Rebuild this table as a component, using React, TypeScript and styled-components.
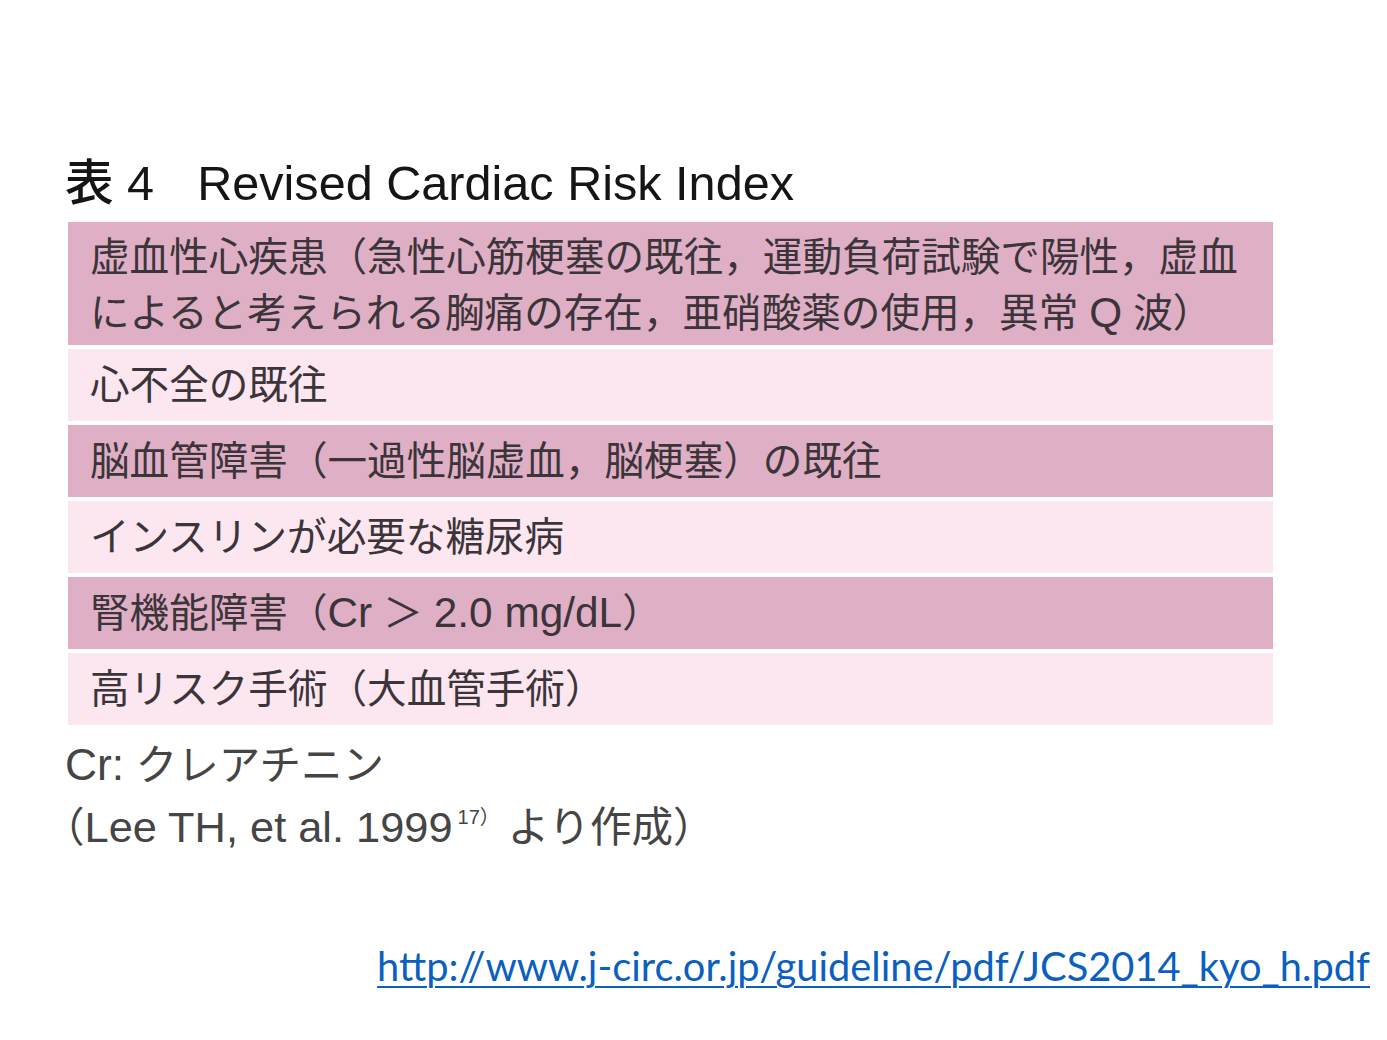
import React from "react";
import styled, { createGlobalStyle } from "styled-components";

const GlobalStyle = createGlobalStyle`
  html, body {
    margin: 0;
    padding: 0;
    background: #ffffff;
  }
  body {
    font-family: "Liberation Sans", "Noto Sans CJK JP", sans-serif;
  }
`;

const Page = styled.div`
  width: 1387px;
  height: 1040px;
  box-sizing: border-box;
  padding: 152px 0 0 0;
  display: flex;
  flex-direction: column;
  background: #ffffff;
`;

const Figure = styled.section`
  display: flex;
  flex-direction: column;
  padding-left: 65px;
`;

const Title = styled.h1`
  margin: 0;
  font-family: "Liberation Sans", "Noto Sans CJK JP", sans-serif;
  font-weight: 400;
  font-size: 48.6px;
  line-height: 62px;
  color: #151515;
  display: flex;
  align-items: baseline;
`;

const TitleLabel = styled.span`
  font-weight: 500;
  margin-right: 43px;
`;

const Table = styled.div`
  margin-top: 8px;
  margin-left: 3px;
  width: 1205px;
  display: flex;
  flex-direction: column;
  gap: 4px;
`;

const Row = styled.div<{ $dark?: boolean; $tall?: boolean }>`
  background: ${(p) => (p.$dark ? "#dfafc6" : "#fce6f0")};
  padding: ${(p) => (p.$tall ? "7px 20px 4px 22px" : "8px 20px 8px 22px")};
  font-family: "Liberation Sans", "Noto Sans CJK JP", sans-serif;
  font-size: 39.6px;
  line-height: 56px;
  color: #3b3539;
  white-space: nowrap;
`;

const Lat = styled.span<{ $scale?: number }>`
  font-size: ${(p) => p.$scale ?? 1.07}em;
  line-height: 0;
`;

const Notes = styled.div`
  margin-top: 10px;
  display: flex;
  flex-direction: column;
  font-family: "Liberation Sans", "Noto Sans CJK JP", sans-serif;
  font-size: 41.5px;
  line-height: 62px;
  color: #454545;
`;

const NoteLine = styled.span`
  white-space: nowrap;
`;

const OpenParen = styled.span`
  display: inline-block;
  margin-left: -22px;
`;

const Sup = styled.sup`
  font-size: 20px;
  line-height: 0;
  vertical-align: baseline;
  position: relative;
  top: -18px;
  margin: 0 8px 0 5px;
`;

const LinkRow = styled.div`
  margin-top: 84px;
  display: flex;
  justify-content: flex-end;
  padding-right: 17px;
`;

const Link = styled.a`
  font-family: "Lato", "Open Sans", sans-serif;
  font-size: 39.8px;
  line-height: 46px;
  color: #0a5fc0;
  text-decoration: underline;
  text-decoration-thickness: 2px;
  text-underline-offset: 5px;
`;

const rows: { text: React.ReactNode; dark: boolean; tall?: boolean }[] = [
  {
    text: (
      <>
        虚血性心疾患（急性心筋梗塞の既往，運動負荷試験で陽性，虚血
        <br />
        によると考えられる胸痛の存在，亜硝酸薬の使用，異常 <Lat>Q</Lat> 波）
      </>
    ),
    dark: true,
    tall: true,
  },
  { text: "心不全の既往", dark: false },
  { text: "脳血管障害（一過性脳虚血，脳梗塞）の既往", dark: true },
  { text: "インスリンが必要な糖尿病", dark: false },
  {
    text: (
      <>
        腎機能障害（<Lat>Cr</Lat> ＞ <Lat>2.0 mg/dL</Lat>）
      </>
    ),
    dark: true,
  },
  { text: "高リスク手術（大血管手術）", dark: false },
];

export default function App() {
  return (
    <>
      <GlobalStyle />
      <Page>
        <Figure>
          <Title>
            <TitleLabel>表 4</TitleLabel>
            Revised Cardiac Risk Index
          </Title>
          <Table>
            {rows.map((r, i) => (
              <Row key={i} $dark={r.dark} $tall={r.tall}>
                {r.text}
              </Row>
            ))}
          </Table>
          <Notes>
            <NoteLine>
              <Lat>Cr:</Lat> クレアチニン
            </NoteLine>
            <NoteLine>
              <OpenParen>（</OpenParen>
              <Lat $scale={1.045}>Lee TH, et al. 1999</Lat>
              <Sup>17）</Sup>より作成）
            </NoteLine>
          </Notes>
        </Figure>
        <LinkRow>
          <Link href="#">http://www.j-circ.or.jp/guideline/pdf/JCS2014_kyo_h.pdf</Link>
        </LinkRow>
      </Page>
    </>
  );
}
